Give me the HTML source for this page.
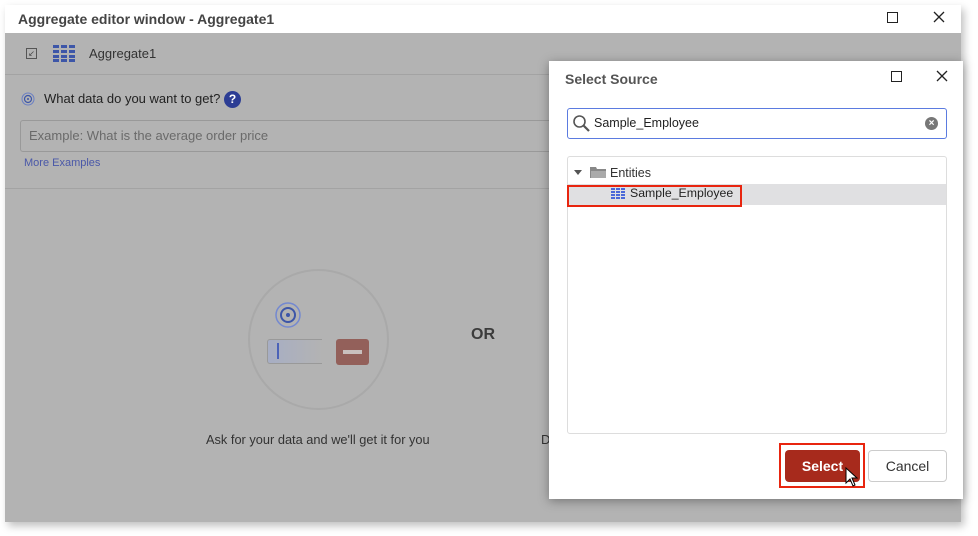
<!DOCTYPE html>
<html><head><style>
*{margin:0;padding:0;box-sizing:border-box}
body{width:978px;height:536px;background:#fff;font-family:"Liberation Sans",sans-serif;position:relative;overflow:hidden}
.win{position:absolute;left:5px;top:5px;width:956px;height:517px;background:#b3b3b3;box-shadow:3px 4px 8px rgba(0,0,0,.25)}
.tb{position:absolute;left:0;top:0;width:956px;height:28px;background:#fff}
.abs{position:absolute}
.t{color:#333;white-space:nowrap}
</style></head><body>
<div class="win">
 <div class="tb">
  <div class="abs t" style="left:13px;top:6px;font-size:14px;font-weight:bold;color:#444">Aggregate editor window - Aggregate1</div>
  <div class="abs" style="left:882px;top:7px;width:11px;height:11px;border:1.3px solid #222"></div>
  <svg class="abs" style="left:928px;top:6px" width="12" height="12"><path d="M1 1L11 11M11 1L1 11" stroke="#222" stroke-width="1.3"/></svg>
 </div>
 <div class="abs" style="left:0;top:69px;width:956px;height:1px;background:#a3a3a3"></div>
 <div class="abs" style="left:0;top:183px;width:956px;height:1px;background:#a3a3a3"></div>
 <div class="abs" style="left:21px;top:43px;width:11px;height:11px;border:1px solid #555;font-size:8px;line-height:9px;text-align:center;color:#444">↙</div>
 <svg class="abs" style="left:48px;top:40px" width="22" height="17"><g fill="#3d56a8"><rect x="0" y="0" width="6" height="3"/><rect x="8" y="0" width="6" height="3"/><rect x="16" y="0" width="6" height="3"/><rect x="0" y="5" width="6" height="3"/><rect x="8" y="5" width="6" height="3"/><rect x="16" y="5" width="6" height="3"/><rect x="0" y="10" width="6" height="3"/><rect x="8" y="10" width="6" height="3"/><rect x="16" y="10" width="6" height="3"/><rect x="0" y="14" width="6" height="3"/><rect x="8" y="14" width="6" height="3"/><rect x="16" y="14" width="6" height="3"/></g></svg>
 <div class="abs t" style="left:84px;top:41px;font-size:13px">Aggregate1</div>
 <svg class="abs" style="left:16px;top:87px" width="14" height="14"><circle cx="7" cy="7" r="6" fill="none" stroke="#6a7fc4" stroke-width="1"/><circle cx="7" cy="7" r="3.5" fill="none" stroke="#3d56a8" stroke-width="1.2"/><circle cx="7" cy="7" r="1" fill="#3d56a8"/></svg>
 <div class="abs t" style="left:39px;top:86px;font-size:13px;color:#222">What data do you want to get?</div>
 <div class="abs" style="left:219px;top:86px;width:17px;height:17px;border-radius:50%;background:#2c3d94;color:#fff;font-size:12px;font-weight:bold;text-align:center;line-height:17px">?</div>
 <div class="abs" style="left:15px;top:115px;width:540px;height:32px;border:1px solid #999;border-radius:3px"></div>
 <div class="abs t" style="left:24px;top:123px;font-size:13px;color:#6a6a6a">Example: What is the average order price</div>
 <div class="abs t" style="left:19px;top:152px;font-size:11px;color:#4a58a8">More Examples</div>
 <div class="abs" style="left:243px;top:264px;width:141px;height:141px;border-radius:50%;border:2px solid #a9a9a9"></div>
 <svg class="abs" style="left:270px;top:297px" width="26" height="26"><circle cx="13" cy="13" r="12" fill="none" stroke="#7489d0" stroke-width="1.5"/><circle cx="13" cy="13" r="7" fill="none" stroke="#3d56a8" stroke-width="2"/><circle cx="13" cy="13" r="2" fill="#3d56a8"/></svg>
 <div class="abs" style="left:262px;top:334px;width:55px;height:25px;border:1px solid #999;border-right:none;border-radius:3px 0 0 3px;background:linear-gradient(90deg,#a7aec4,#b3b3b3)"></div>
 <div class="abs" style="left:272px;top:338px;width:2px;height:16px;background:#4b62b8"></div>
 <div class="abs" style="left:331px;top:334px;width:33px;height:26px;border-radius:3px;background:#93605a"></div>
 <div class="abs" style="left:338px;top:345px;width:19px;height:4px;background:#c9c0be"></div>
 <div class="abs t" style="left:466px;top:321px;font-size:16px;font-weight:bold;color:#3c3c3c">OR</div>
 <div class="abs t" style="left:201px;top:427px;font-size:12.8px;color:#333">Ask for your data and we'll get it for you</div>
 <div class="abs t" style="left:536px;top:427px;font-size:13px;color:#333">D</div>
</div>
<div class="abs" style="left:549px;top:61px;width:414px;height:438px;background:#fff;box-shadow:0 2px 10px rgba(0,0,0,.35)">
 <div class="abs t" style="left:16px;top:10px;font-size:14px;font-weight:bold;color:#555">Select Source</div>
 <div class="abs" style="left:342px;top:10px;width:11px;height:11px;border:1.3px solid #222"></div>
 <svg class="abs" style="left:387px;top:9px" width="12" height="12"><path d="M1 1L11 11M11 1L1 11" stroke="#222" stroke-width="1.3"/></svg>
 <div class="abs" style="left:18px;top:47px;width:380px;height:31px;border:1px solid #5b7be0;border-radius:3px"></div>
 <svg class="abs" style="left:23px;top:53px" width="19" height="19"><circle cx="7.5" cy="7.5" r="5.5" fill="none" stroke="#555" stroke-width="1.6"/><path d="M11.5 11.5L17 17" stroke="#555" stroke-width="2.2"/></svg>
 <div class="abs t" style="left:45px;top:55px;font-size:12.5px;color:#222">Sample_Employee</div>
 <div class="abs" style="left:376px;top:56px;width:13px;height:13px;border-radius:50%;background:#777;color:#fff;font-size:10px;line-height:13px;text-align:center;font-weight:bold">×</div>
 <div class="abs" style="left:18px;top:95px;width:380px;height:278px;border:1px solid #ddd;border-radius:3px"></div>
 <div class="abs" style="left:19px;top:123px;width:378px;height:21px;background:#e0e0e2"></div>
 <svg class="abs" style="left:25px;top:109px" width="8" height="6"><path d="M0 0H8L4 5Z" fill="#555"/></svg>
 <svg class="abs" style="left:41px;top:105px" width="17" height="13"><path d="M0 1H6L7 3H16V12H0Z" fill="#888"/><path d="M1 5H16V12H1Z" fill="#aaa"/></svg>
 <div class="abs t" style="left:61px;top:105px;font-size:12.5px;color:#333">Entities</div>
 <div class="abs" style="left:18px;top:124px;width:175px;height:22px;border:2px solid #e8250f"></div>
 <svg class="abs" style="left:62px;top:127px" width="14" height="12"><g fill="#4a68d8"><rect x="0" y="0" width="4" height="2"/><rect x="5" y="0" width="4" height="2"/><rect x="10" y="0" width="4" height="2"/><rect x="0" y="3" width="4" height="2"/><rect x="5" y="3" width="4" height="2"/><rect x="10" y="3" width="4" height="2"/><rect x="0" y="6" width="4" height="2"/><rect x="5" y="6" width="4" height="2"/><rect x="10" y="6" width="4" height="2"/><rect x="0" y="9" width="4" height="2"/><rect x="5" y="9" width="4" height="2"/><rect x="10" y="9" width="4" height="2"/></g></svg>
 <div class="abs t" style="left:81px;top:125px;font-size:12.3px;color:#222">Sample_Employee</div>
 <div class="abs" style="left:230px;top:382px;width:86px;height:45px;border:2px solid #e8250f"></div>
 <div class="abs" style="left:236px;top:389px;width:75px;height:32px;border-radius:4px;background:#a72a1c;color:#fff;font-size:14px;font-weight:bold;text-align:center;line-height:32px">Select</div>
 <svg class="abs" style="left:296px;top:406px" width="14" height="20"><path d="M1 1V16L5 12L8 19L10 18L7 11H12Z" fill="#fff" stroke="#000" stroke-width="1"/></svg>
 <div class="abs" style="left:319px;top:389px;width:79px;height:32px;border-radius:4px;border:1px solid #ccc;color:#333;font-size:14px;text-align:center;line-height:30px">Cancel</div>
</div>
</body></html>
